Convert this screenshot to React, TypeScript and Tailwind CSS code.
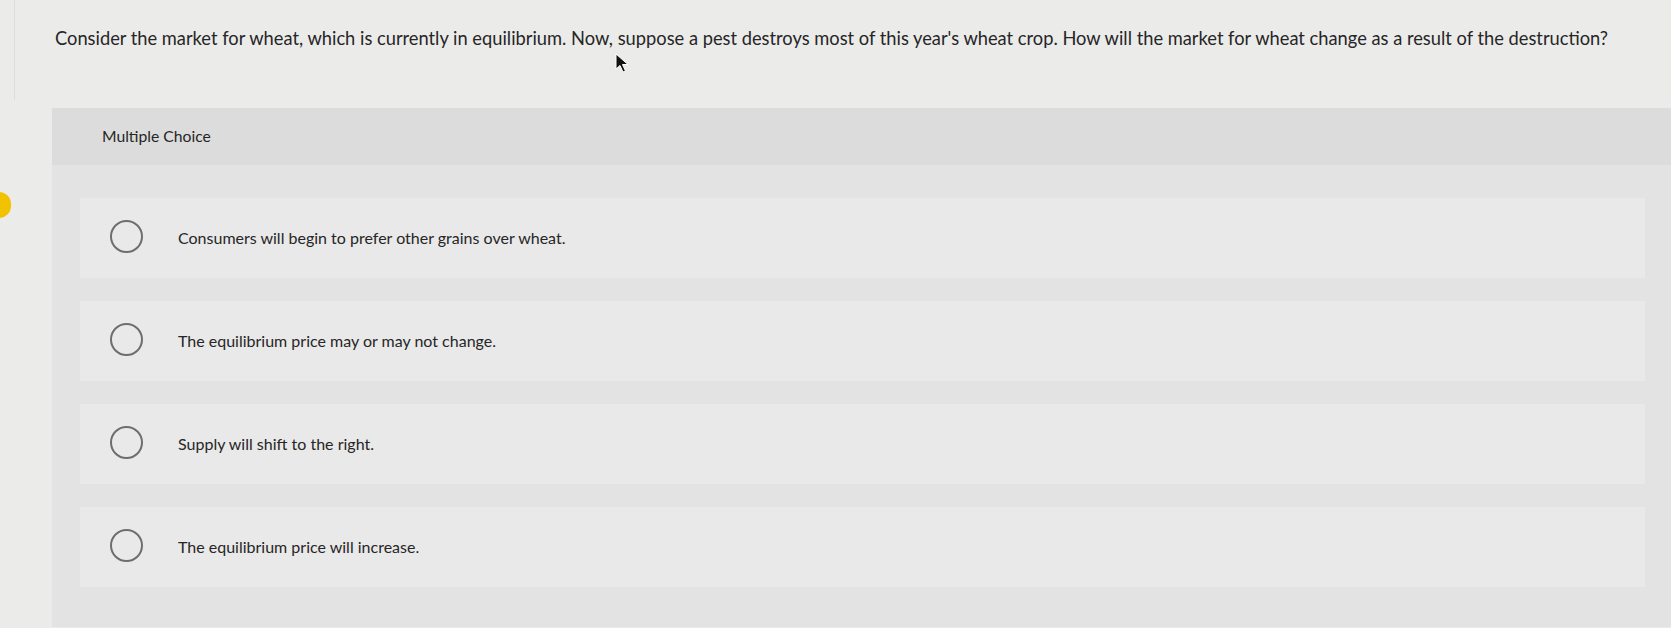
import React from 'react';

const options = [
  'Consumers will begin to prefer other grains over wheat.',
  'The equilibrium price may or may not change.',
  'Supply will shift to the right.',
  'The equilibrium price will increase.',
];

export default function App() {
  return (
    <div className="relative w-[1671px] h-[628px] overflow-hidden bg-[#ebebea] font-['Lato',sans-serif] text-[#262626]">
      <div className="absolute left-[14px] top-0 h-[100px] w-px bg-[#dcdcdc]" />
      <p className="pl-[55px] pt-[26px] text-[18.3px] leading-[24px]">
        Consider the market for wheat, which is currently in equilibrium. Now, suppose a pest destroys most of this year's wheat crop. How will the market for wheat change as a result of the destruction?
      </p>
      <div className="ml-[52px] mt-[58px] bg-[#e3e3e3] pb-[40px]">
        <div className="flex h-[57px] items-center bg-[#dcdcdc] pl-[50px] text-[15.7px]">Multiple Choice</div>
        <div className="flex flex-col gap-[23px] pl-[28px] pr-[26px] pt-[33px]">
          {options.map((o, i) => (
            <div key={i} className="flex h-[80px] items-center bg-[#e9e9e9] pl-[30px]">
              <div className="-mt-[3px] h-[33px] w-[33px] shrink-0 rounded-full border-2 border-[#6e6e6e]" />
              <span className="ml-[35px] text-[16px]">{o}</span>
            </div>
          ))}
        </div>
      </div>
      <div className="absolute left-[-13px] top-[192px] h-[26px] w-[24px] rounded-full bg-[#f2c200]" />
      <svg className="absolute left-[615px] top-[53px]" width="16" height="22" viewBox="0 0 16 22">
        <path d="M1 1 L1 16 L5 12.5 L8 19 L10.5 18 L7.5 11.5 L13 11.5 Z" fill="#111" stroke="#fff" strokeWidth="1" />
      </svg>
    </div>
  );
}
